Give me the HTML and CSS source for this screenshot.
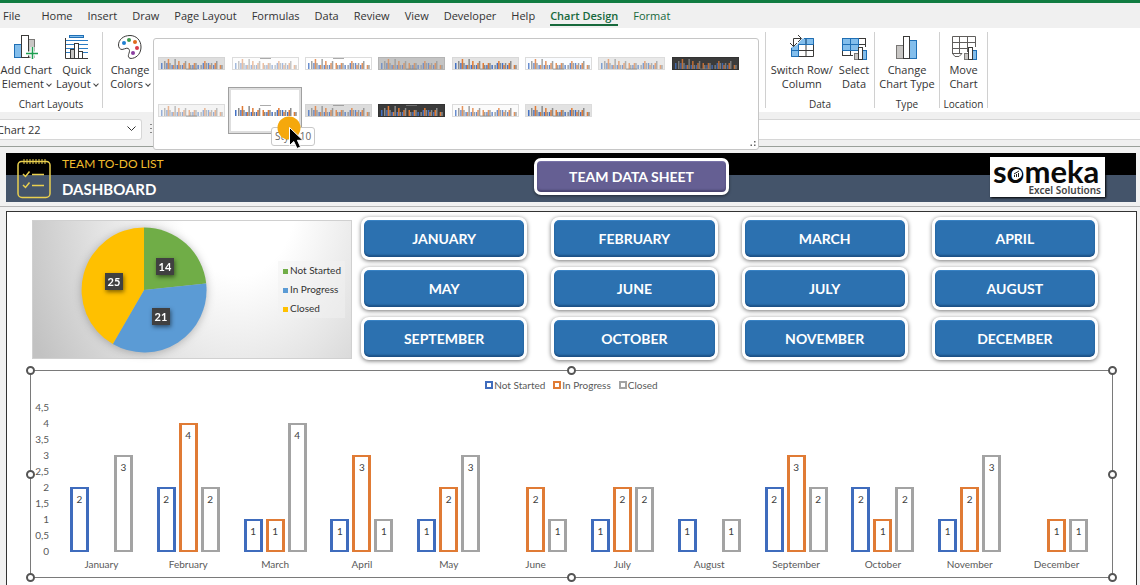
FILE: index.html
```html
<!DOCTYPE html>
<html lang="en">
<head>
  <meta charset="utf-8">
  <title>Team To-Do List</title>
  <meta name="viewport" content="width=device-width, initial-scale=1.0">
  <link rel="stylesheet" href="styles.css">
</head>
<body>
  <nav class="tabs">
    <a href="#">File</a>
    <a href="#">Home</a>
    <a href="#">Insert</a>
    <a href="#">Draw</a>
    <a href="#">Page Layout</a>
    <a href="#">Formulas</a>
    <a href="#">Data</a>
    <a href="#">Review</a>
    <a href="#">View</a>
    <a href="#">Developer</a>
    <a href="#">Help</a>
    <a href="#" class="active">Chart Design</a>
    <a href="#" class="context">Format</a>
  </nav>

  <div class="ribbon">
    <section class="group group-layouts">
      <div class="tools">
        <button class="tool">
          <svg width="26" height="26" viewBox="0 0 26 26">
            <rect x="1.5" y="10.5" width="7" height="13" fill="#83beec" stroke="#1f6fb5"/>
            <rect x="15.5" y="5.5" width="6" height="18" fill="#c8c6c4" stroke="#797775"/>
            <rect x="8.5" y="1.5" width="7" height="22" fill="#fff" stroke="#3b3a39"/>
            <path d="M19.5 13v12M13 19.5h12" stroke="#fff" stroke-width="4"/>
            <path d="M19.5 13v12M13 19.5h12" stroke="#1e9e50" stroke-width="1.5"/>
          </svg>
          <span>Add Chart<br>Element <i class="caret"></i></span>
        </button>
        <button class="tool">
          <svg width="26" height="26" viewBox="0 0 26 26">
            <rect x="5.5" y="1.5" width="14" height="2" fill="#83beec" stroke="#1f6fb5"/>
            <path d="M2 6.500h22M2 10.500h22M2 14.500h22M2 18.500h22" stroke="#2b7cc4"/>
            <path d="M1.5 4v20.500H24" fill="none" stroke="#3b3a39"/>
            <rect x="6.5" y="15.5" width="4" height="9" fill="#c8c6c4" stroke="#3b3a39"/>
            <rect x="10.5" y="9.5" width="4" height="15" fill="#fff" stroke="#3b3a39"/>
            <rect x="14.5" y="17.5" width="4" height="7" fill="#fff" stroke="#3b3a39"/>
          </svg>
          <span>Quick<br>Layout <i class="caret"></i></span>
        </button>
      </div>
      <h2>Chart Layouts</h2>
    </section>

    <section class="group group-styles">
      <div class="tools">
        <button class="tool">
          <svg width="26" height="26" viewBox="0 0 26 26">
            <path d="M13 1.5C6 1.5 1.5 6 1.5 11c0 2.600 1.500 4.500 3.600 4.500 1.900 0 2.900-1.300 4.700-1.300 2.200 0 3 1.700 2.600 3.600-.5 2.300-1.400 3.300-.9 5 .5 1.500 2 1.900 4 1.500 5.200-1 8.500-5.700 8.500-11.300C24 6 19 1.500 13 1.500z" fill="#fff" stroke="#3b3a39"/>
            <circle cx="7" cy="9" r="2" fill="#1f7fd0"/>
            <circle cx="12" cy="6" r="2" fill="#3a9a4e"/>
            <circle cx="18" cy="8" r="2" fill="#e06a1c"/>
            <circle cx="20" cy="14" r="2" fill="#d93a4a"/>
            <circle cx="16" cy="19" r="2" fill="#8a3fa0"/>
          </svg>
          <span>Change<br>Colors <i class="caret"></i></span>
        </button>
      </div>
      <div class="gallery-slot">
        <div class="gallery">
          <div class="thumbs" id="thumbs"></div>
          <div class="tooltip">Style 10</div>
          <svg class="pointer" width="26" height="34" viewBox="0 0 26 34">
            <circle cx="12" cy="12" r="11.500" fill="#f5a80c"/>
            <path d="M12.500 11.500v18l4.300-4 3.200 7 3.500-1.600-3.100-6.600h5.500z" fill="#000" stroke="#fff"/>
          </svg>
          <svg class="grip" width="6" height="6" viewBox="0 0 6 6" fill="#666">
            <path d="M4 0h1.500v1.500H4zM4 3.500h1.500V5H4zM.5 3.500H2V5H.5z"/>
          </svg>
        </div>
      </div>
    </section>

    <section class="group group-data">
      <div class="tools">
        <button class="tool">
          <svg width="28" height="26" viewBox="0 0 28 26">
            <path d="M3 22.500V14l8-9.500h14.500v18z" fill="#fff"/>
            <path d="M14.500 4.500h11v6H9zM3.500 13l7-2.500v12h-7z" fill="#83beec"/>
            <path d="M10.500 10.500v12M18 4.500v18M25.500 4.500v18M10.500 16.500h15M3.500 22.500h22" fill="none" stroke="#3b3a39"/>
            <path d="M3.500 14v8.500h7v-12h15v-6H16M18 4.500v6M3.500 16.500h7" fill="none" stroke="#1f6fb5"/>
            <path d="M5.500 12.500V4.500H13M2 9l3.500 3.500L9 9M10 1l3.500 3.500L10 8" fill="none" stroke="#3b3a39"/>
          </svg>
          <span>Switch Row/<br>Column</span>
        </button>
        <button class="tool">
          <svg width="28" height="26" viewBox="0 0 28 26">
            <rect x="2.500" y="4.500" width="23" height="17" fill="#fff" stroke="#3b3a39"/>
            <path d="M2.500 16.500h23M10.500 4v18M18.500 4v18M18 10.500h7" stroke="#3b3a39"/>
            <path d="M2.500 4.500h16v12h-16zM10.500 4.500v12M2.500 10.500h16" fill="#83beec" stroke="#1f6fb5"/>
            <path d="M13 18h5v-5h10v13H13z" fill="#fff"/>
            <rect x="14.500" y="19.500" width="4" height="6" fill="#c8c6c4" stroke="#797775"/>
            <rect x="22.500" y="16.500" width="4" height="9" fill="#83beec" stroke="#1f6fb5"/>
            <rect x="18.500" y="13.500" width="4" height="12" fill="#fff" stroke="#3b3a39"/>
          </svg>
          <span>Select<br>Data</span>
        </button>
      </div>
      <h2>Data</h2>
    </section>

    <section class="group group-type">
      <div class="tools">
        <button class="tool">
          <svg width="26" height="26" viewBox="0 0 26 26">
            <rect x="2.500" y="11.500" width="7" height="13" fill="#c8c6c4" stroke="#797775"/>
            <rect x="15.500" y="6.500" width="7" height="18" fill="#83beec" stroke="#1f6fb5"/>
            <rect x="9.500" y="2.500" width="6" height="22" fill="#fff" stroke="#3b3a39"/>
          </svg>
          <span>Change<br>Chart Type</span>
        </button>
      </div>
      <h2>Type</h2>
    </section>

    <section class="group group-location">
      <div class="tools">
        <button class="tool">
          <svg width="28" height="26" viewBox="0 0 28 26">
            <path d="M2.500 20V2.500h23V17M9.500 2.500v17M17.500 2.500v17M2.500 8.500h23M2.500 14.500h23M2.500 19.500h9.500l-3 3H5z" fill="none" stroke="#605e5c"/>
            <path d="M13 18h5v-5h10v13H13z" fill="#fff"/>
            <rect x="14.500" y="19.500" width="4" height="6" fill="#c8c6c4" stroke="#797775"/>
            <rect x="22.500" y="16.500" width="4" height="9" fill="#83beec" stroke="#1f6fb5"/>
            <rect x="18.500" y="13.500" width="4" height="12" fill="#fff" stroke="#3b3a39"/>
          </svg>
          <span>Move<br>Chart</span>
        </button>
      </div>
      <h2>Location</h2>
    </section>
  </div>

  <div class="formula-bar">
    <div class="name-box">
      <input type="text" value="Chart 22" aria-label="Name box">
      <svg width="9" height="6" viewBox="0 0 9 6"><path d="M.5.500l4 4 4-4" fill="none" stroke="#333"/></svg>
    </div>
    <span class="dots"></span>
    <input class="formula" type="text" aria-label="Formula">
  </div>

  <header class="banner">
    <svg class="notepad" width="34" height="42" viewBox="0 0 34 42" fill="none" stroke="#e9cf4f" stroke-width="1.500">
      <path d="M6 4.500H4.500a3.500 3.500 0 0 0-3.500 3.500v28.500A4 4 0 0 0 5 40.500h24a4 4 0 0 0 4-4V8a3.500 3.500 0 0 0-3.500-3.500H28M5 4.500h24"/>
      <path d="M7 2v5M10 2v5M13 2v5M16 2v5M19 2v5M22 2v5M25 2v5M28 2v5" stroke-width="1"/>
      <path d="M6 17l2.500 2.500 4-5M6 28l2.500 2.500 4-5M15 17.500h12M15 28.500h12"/>
    </svg>
    <div class="titles">
      <p>TEAM TO-DO LIST</p>
      <h1>DASHBOARD</h1>
    </div>
    <button class="sheet-button">TEAM DATA SHEET</button>
    <div class="logo">
      <div class="logo-name">someka
        <svg class="logo-mark" width="10" height="10" viewBox="0 0 10 10">
          <circle cx="5" cy="5" r="5" fill="#fff"/>
          <path d="M2 6h1v2H2zM4 5h1v3H4zM6 4h1v4H6z" fill="#222"/>
          <path d="M2 5l5-3" stroke="#222"/>
        </svg>
      </div>
      <div class="logo-sub">Excel Solutions</div>
    </div>
  </header>

  <main class="sheet">
    <div class="overview">
      <div class="pie-card">
        <svg class="pie" viewBox="0 0 126 126" width="126" height="126">
          <path d="M63 63V.500A62.500 62.500 0 0 1 125.200 56.500z" fill="#70ad47"/>
          <path d="M63 63L125.200 56.500A62.500 62.500 0 0 1 31.800 117.100z" fill="#5b9bd5"/>
          <path d="M63 63L31.800 117.100A62.500 62.500 0 0 1 63 .500z" fill="#ffc000"/>
          <g class="pie-boxes">
            <rect x="75" y="31" width="18" height="17"/>
            <rect x="71" y="81" width="18" height="17"/>
            <rect x="24" y="46" width="18" height="17"/>
          </g>
          <g class="pie-values">
            <text x="84" y="44">14</text>
            <text x="80" y="94">21</text>
            <text x="33" y="59">25</text>
          </g>
        </svg>
        <ul class="pie-legend">
          <li class="green">Not Started</li>
          <li class="sky">In Progress</li>
          <li class="yellow">Closed</li>
        </ul>
      </div>
      <div class="months">
        <button>JANUARY</button>
        <button>FEBRUARY</button>
        <button>MARCH</button>
        <button>APRIL</button>
        <button>MAY</button>
        <button>JUNE</button>
        <button>JULY</button>
        <button>AUGUST</button>
        <button>SEPTEMBER</button>
        <button>OCTOBER</button>
        <button>NOVEMBER</button>
        <button>DECEMBER</button>
      </div>
    </div>

    <div class="chart">
      <ul class="chart-legend">
        <li class="blue">Not Started</li>
        <li class="orange">In Progress</li>
        <li class="gray">Closed</li>
      </ul>
      <div class="plot">
        <div class="axis">
          <span>4,5</span><span>4</span><span>3,5</span><span>3</span><span>2,5</span>
          <span>2</span><span>1,5</span><span>1</span><span>0,5</span><span>0</span>
        </div>
        <div class="categories" id="categories"></div>
      </div>
      <i class="handle top left"></i>
      <i class="handle top center"></i>
      <i class="handle top right"></i>
      <i class="handle middle left"></i>
      <i class="handle middle right"></i>
      <i class="handle bottom left"></i>
      <i class="handle bottom center"></i>
      <i class="handle bottom right"></i>
    </div>
  </main>
  <script src="script.js"></script>
</body>
</html>
```
FILE: styles.css
```css
*, *::before {
  box-sizing: border-box;
}
body {
  margin: 0;
  min-height: 100vh;
  display: flex;
  flex-direction: column;
  background-color: #f1f1f1;
  font-family: "Open Sans", "Noto Sans", sans-serif;
  font-size: 11px;
  color: #333;
  overflow: hidden;
}
h1, h2, p, ul {
  margin: 0;
  padding: 0;
  font-weight: normal;
  list-style: none;
}
button, input {
  font: inherit;
  color: inherit;
  border: none;
  background: none;
  padding: 0;
}
button {
  cursor: pointer;
}

/* ribbon */
.tabs {
  display: flex;
  gap: 15px;
  height: 28px;
  padding: 3px 3px 0;
  border-top: 3px solid #107c41;
  background-color: #f0f0f0;
}
.tabs a {
  color: #333;
  line-height: 20px;
  height: 20px;
  text-decoration: none;
  white-space: nowrap;
}
.tabs a:first-child {
  margin-right: 6px;
}
.tabs .active {
  color: #17693c;
  font-weight: 600;
  border-bottom: 2px solid #17693c;
}
.tabs .context {
  color: #17693c;
}
.ribbon {
  display: flex;
  height: 84px;
  padding: 4px 0;
  background-color: #fff;
}
.group {
  position: relative;
  display: flex;
  flex-direction: column;
  align-items: center;
  height: 76px;
  border-right: 1px solid #d0d0d0;
}
.group h2 {
  margin-top: 7px;
  font-size: 10px;
  line-height: 12px;
}
.tools {
  display: flex;
  justify-content: center;
  gap: 6px;
}
.tool {
  display: flex;
  flex-direction: column;
  align-items: center;
  gap: 3px;
  padding-top: 2px;
  font-size: 11px;
  line-height: 14px;
  white-space: nowrap;
}
.caret {
  display: inline-block;
  width: 4px;
  height: 4px;
  margin-bottom: 2px;
  border: solid #444;
  border-width: 0 1px 1px 0;
  transform: rotate(45deg);
}
.group-layouts {
  width: 103px;
}
.group-layouts .tools {
  gap: 4px;
  padding-right: 4px;
}
.group-styles {
  flex-direction: row;
  align-items: flex-start;
  width: 663px;
}
.group-styles .tools {
  width: 50px;
  padding-left: 4px;
}
.group-data {
  width: 109px;
}
.group-type {
  width: 65px;
}
.group-location {
  width: 48px;
}
.gallery-slot {
  position: relative;
  width: 606px;
}
.gallery {
  position: absolute;
  z-index: 2;
  top: 6px;
  left: 0;
  width: 606px;
  height: 112px;
  padding: 1px 16px 0 1px;
  border: 1px solid #c6c6c6;
  border-radius: 3px;
  background-color: #fff;
}
.thumbs {
  display: grid;
  grid-template-columns: repeat(8, 1fr);
}
.thumb {
  display: flex;
  align-items: center;
  justify-content: center;
  height: 47px;
}
.thumb.selected {
  border: 1px solid #a0a0a0;
  box-shadow: inset 0 0 0 2px #dedede;
}
.tooltip {
  position: absolute;
  left: 117px;
  top: 88px;
  padding: 0 3px;
  border: 1px solid #c8c8c8;
  border-radius: 3px;
  background-color: #fff;
  color: #666;
  font-size: 10px;
  line-height: 17px;
}
.pointer {
  position: absolute;
  left: 123px;
  top: 77px;
}
.grip {
  position: absolute;
  right: 2px;
  bottom: 2px;
}

/* formula bar */
.formula-bar {
  display: flex;
  align-items: center;
  height: 35px;
  border-bottom: 1px solid #9aa09a;
  background-color: #f0f0f0;
}
.name-box {
  display: flex;
  align-items: center;
  width: 142px;
  height: 21px;
  padding-right: 5px;
  border: 1px solid #d6d6d6;
  border-left: none;
  border-radius: 0 3px 3px 0;
  background-color: #fff;
}
.name-box input {
  flex: 1;
  min-width: 0;
  text-indent: -3px;
}
.dots {
  width: 2px;
  height: 10px;
  margin: 0 8px;
  background: repeating-linear-gradient(#888 0 1px, transparent 1px 4px);
}
.formula {
  flex: 1;
  height: 21px;
  border: 1px solid #d6d6d6;
  border-right: none;
  background-color: #fff;
}

/* title banner */
.banner {
  display: flex;
  justify-content: space-between;
  align-items: center;
  height: 49px;
  margin: 6px 4px 0 6px;
  padding: 0 31px 0 11px;
  background: linear-gradient(#000 22px, #44546a 22px);
  font-family: Lato, sans-serif;
}
.titles {
  flex: 1;
  align-self: flex-start;
  margin-left: 11px;
}
.titles p {
  color: #f0bc2e;
  font-size: 12px;
  line-height: 22px;
}
.titles h1 {
  color: #fff;
  font-size: 15px;
  font-weight: bold;
  line-height: 28px;
}
.sheet-button {
  flex: none;
  width: 195px;
  height: 37px;
  margin-bottom: 2px;
  border: 3px solid #fff;
  border-radius: 7px;
  background-color: #655f93;
  box-shadow: inset 0 -2px 2px #49446f, inset 0 1px 1px #7b75ab, 0 1px 3px rgba(0, 0, 0, 0.5);
  color: #fff;
  font-size: 14px;
  font-weight: bold;
}
.logo {
  flex: none;
  width: 115px;
  height: 40px;
  margin: 0 0 2px 261px;
  padding: 0 4px 0 3px;
  background-color: #fff;
  box-shadow: 1px 1px 2px #000;
  color: #0a0a0a;
}
.logo-name {
  position: relative;
  font-size: 31px;
  font-weight: bold;
  line-height: 28px;
}
.logo-mark {
  position: absolute;
  left: 19px;
  top: 12px;
}
.logo-sub {
  font-family: "Noto Sans", sans-serif;
  font-size: 10px;
  font-weight: 600;
  line-height: 10px;
  text-align: right;
  color: #444;
}

/* sheet */
.sheet {
  flex: 1;
  position: relative;
  margin: 9px 3px 0 6px;
  padding: 5px 23px 7px;
  border: 1px solid #333;
  border-bottom: none;
  background-color: #fff;
}
.sheet::before {
  content: "";
  position: absolute;
  top: -6px;
  left: -7px;
  right: -4px;
  height: 1px;
  background-color: #b5b5b5;
}
.overview {
  display: flex;
  gap: 9px;
  padding: 0 15px 0 2px;
}
.pie-card {
  display: flex;
  align-items: center;
  justify-content: space-between;
  width: 320px;
  height: 139px;
  margin-top: 3px;
  padding: 0 6px 0 48px;
  border: 1px solid #d0d0d0;
  background: radial-gradient(ellipse 230px 300px at 205px -20px, #fff 25%, #e4e4e4 60%, #c2c2c2 100%);
  font-family: Lato, sans-serif;
}
.pie {
  overflow: visible;
  filter: drop-shadow(0 1px 4px rgba(0, 0, 0, 0.25));
}
.pie-boxes {
  fill: #404040;
  filter: drop-shadow(1px 2px 2px rgba(0, 0, 0, 0.5));
}
.pie-values {
  fill: #fff;
  font-size: 11px;
  font-weight: bold;
  text-anchor: middle;
}
.pie-legend {
  padding: 0 4px 0 5px;
  background-color: rgba(242, 242, 242, 0.5);
  font-size: 10px;
  line-height: 19px;
  color: #333;
}
.pie-legend li::before {
  content: "";
  display: inline-block;
  width: 5px;
  height: 5px;
  margin-right: 2px;
}
.pie-legend .green::before {
  background-color: #70ad47;
}
.pie-legend .sky::before {
  background-color: #5b9bd5;
}
.pie-legend .yellow::before {
  background-color: #ffc000;
}
.months {
  flex: 1;
  display: grid;
  grid-template-columns: repeat(4, 1fr);
  gap: 7px 24px;
}
.months button {
  height: 43px;
  border: 3px solid #fff;
  border-radius: 8px;
  background-color: #2c71b0;
  background-clip: padding-box;
  box-shadow: inset 0 -2px 2px #1d5085, inset 0 1px 1px #3b84c6, 0 1px 4px rgba(0, 0, 0, 0.55);
  color: #fff;
  font-family: Lato, sans-serif;
  font-size: 14px;
  font-weight: bold;
}

/* selected bar chart */
.chart {
  position: relative;
  margin-top: 10px;
  padding: 8px 0 7px;
  border: 1px solid #7a7a7a;
  font-family: Lato, sans-serif;
  font-size: 10px;
  line-height: 12px;
  color: #595959;
}
.chart-legend {
  display: flex;
  justify-content: center;
  gap: 8px;
  margin: 0 0 8px;
}
.chart-legend li {
  display: flex;
  align-items: center;
  gap: 1px;
}
.chart-legend li::before {
  content: "";
  width: 8px;
  height: 8px;
  border-style: solid;
  border-width: 2px;
}
.plot {
  display: flex;
  padding-right: 12px;
}
.axis {
  display: flex;
  flex-direction: column;
  width: 27px;
  padding-right: 9px;
  line-height: 16px;
  text-align: right;
}
.categories {
  flex: 1;
  display: grid;
  grid-template-columns: repeat(12, 1fr);
}
.category {
  text-align: center;
}
.bars {
  display: grid;
  grid-template-columns: repeat(3, 19px);
  justify-content: center;
  align-items: end;
  gap: 3px;
  height: 153px;
  margin-bottom: 6px;
}
.bar {
  padding-top: 4px;
  border-style: solid;
  border-width: 2px 3px;
}
.bar span {
  color: #404040;
}
.bar.blue, .chart-legend .blue::before {
  border-color: #3f6cbd;
}
.bar.orange, .chart-legend .orange::before {
  border-color: #e07b35;
}
.bar.gray, .chart-legend .gray::before {
  border-color: #a3a3a3;
}
.handle {
  position: absolute;
  width: 9px;
  height: 9px;
  border: 2px solid #555;
  border-radius: 50%;
  background-color: #fff;
}
.handle.top {
  top: -5px;
}
.handle.middle {
  top: calc(50% - 4px);
}
.handle.bottom {
  bottom: -5px;
}
.handle.left {
  left: -5px;
}
.handle.center {
  left: calc(50% - 5px);
}
.handle.right {
  right: -5px;
}
```
FILE: script.js
```js
const months = [
  ["January", 2, 0, 3],
  ["February", 2, 4, 2],
  ["March", 1, 1, 4],
  ["April", 1, 3, 1],
  ["May", 1, 2, 3],
  ["June", 0, 2, 1],
  ["July", 1, 2, 2],
  ["August", 1, 0, 1],
  ["September", 2, 3, 2],
  ["October", 2, 1, 2],
  ["November", 1, 2, 3],
  ["December", 0, 1, 1]
];
const series = ["blue", "orange", "gray"];
const unit = 32; // pixels per task

document.getElementById("categories").innerHTML = months.map(([name, ...values]) => {
  const bars = values.map((v, i) => v
    ? `<div class="bar ${series[i]}" style="height:${v * unit + 1}px"><span>${v}</span></div>`
    : "<div></div>").join("");
  return `<div class="category"><div class="bars">${bars}</div>${name}</div>`;
}).join("");

// background, border, bar colours, bar opacity and title position of each chart style
const soft = ["#7f9fd0", "#e5a67c", "#b0b0b0"];
const full = ["#4472c4", "#e07b35", "#8c8c8c"];
const styles = [
  ["#dedede", "#d4d4d4", full, 0.8, "bottom"],
  ["#fdfdfd", "#dcdcdc", soft, 0.7, "top"],
  ["#ffffff", "#dcdcdc", full, 0.8, "top"],
  ["#c4c4c4", "#b4b4b4", full, 0.6, "bottom"],
  ["#e4e4e4", "#d8d8d8", full, 1, "bottom"],
  ["#fafcff", "#dcdcdc", full, 0.8, "bottom"],
  ["#e9e9e9", "#dcdcdc", soft, 1, "bottom"],
  ["#3b3b3b", "#333333", full, 0.8, "bottom"],
  ["#f4f4f4", "#dcdcdc", soft, 0.8, "bottom"],
  ["#ffffff", "#ffffff", full, 1, "top"],
  ["#dcdcdc", "#d4d4d4", full, 0.8, "top"],
  ["#3b3b3b", "#333333", full, 1, "top"],
  ["#fbfbfb", "#dcdcdc", full, 0.8, "bottom"],
  ["#e2e2e2", "#dcdcdc", full, 1, "bottom"]
];

document.getElementById("thumbs").innerHTML = styles.map(([bg, border, colors, opacity, title], n) => {
  let rects = "";
  months.forEach(([, ...values], m) => {
    values.forEach((v, s) => {
      const h = v ? v * 2 + 2 : 0;
      rects += `<rect x="${3 + m * 5.2 + s * 1.5}" y="${12 - h}" width="1.5" height="${h}" fill="${colors[s]}"/>`;
    });
  });
  const ty = title === "top" ? 1.5 : 12;
  return `<button class="thumb${n === 9 ? " selected" : ""}" aria-label="Style ${n + 1}">
    <svg width="67" height="13" viewBox="0 0 67 13">
      <rect x=".5" y=".5" width="66" height="12" fill="${bg}" stroke="${border}"/>
      <g opacity="${opacity}">${rects}</g>
      <path d="M28 ${ty}h11" stroke="#888" stroke-opacity=".7"/>
    </svg>
  </button>`;
}).join("");
```
